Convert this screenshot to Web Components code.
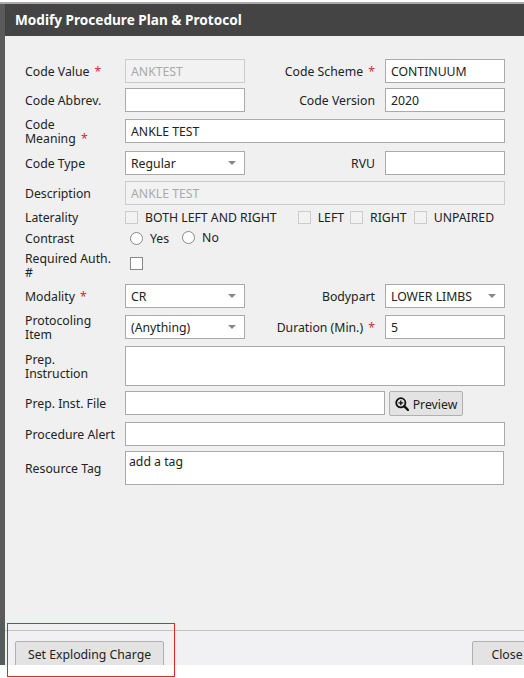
<!DOCTYPE html>
<html>
<head>
<meta charset="utf-8">
<title>Modify Procedure Plan &amp; Protocol</title>
<style>
  html, body { margin: 0; padding: 0; background: #fff; }
  body { font: 12.25px/14px "Noto Sans", "Open Sans", sans-serif; color: #222; }
  #left { margin-left: 21px; }
  #right { margin-left: 6px; }
  #unpaired { margin-left: 7px; }
</style>
</head>
<body>
<modal-shell heading="Modify Procedure Plan &amp; Protocol">
  <form-row label="Code Value" required side-label="Code Scheme" side-required>
    <text-field disabled>ANKTEST</text-field>
    <text-field slot="side">CONTINUUM</text-field>
  </form-row>
  <form-row label="Code Abbrev." side-label="Code Version" style="--gap:5px">
    <text-field></text-field>
    <text-field slot="side">2020</text-field>
  </form-row>
  <form-row label="Code<br>Meaning" required wide style="--gap:7px">
    <text-field>ANKLE TEST</text-field>
  </form-row>
  <form-row label="Code Type" side-label="RVU" style="--gap:8px">
    <select-field>Regular</select-field>
    <text-field slot="side"></text-field>
  </form-row>
  <form-row label="Description" wide style="--gap:6px">
    <text-field disabled>ANKLE TEST</text-field>
  </form-row>
  <form-row label="Laterality" wide style="--gap:5px;--row:14px">
    <check-row>
      <check-box>BOTH LEFT AND RIGHT</check-box>
      <check-box id="left">LEFT</check-box>
      <check-box id="right">RIGHT</check-box>
      <check-box id="unpaired">UNPAIRED</check-box>
    </check-row>
  </form-row>
  <form-row label="Contrast" wide style="--gap:6px;--row:16px">
    <check-row style="padding-left:5px">
      <radio-dot>Yes</radio-dot>
      <radio-dot style="margin-left:13px;margin-top:-2px">No</radio-dot>
    </check-row>
  </form-row>
  <form-row label="Required Auth.<br>#" wide style="--gap:5px;--row:28px">
    <check-row style="padding-left:5px;margin-bottom:3px"><check-box active></check-box></check-row>
  </form-row>
  <form-row label="Modality" required side-label="Bodypart" style="--gap:5px">
    <select-field>CR</select-field>
    <select-field slot="side">LOWER LIMBS</select-field>
  </form-row>
  <form-row label="Protocoling<br>Item" side-label="Duration (Min.)" side-required style="--gap:7px">
    <select-field>(Anything)</select-field>
    <text-field slot="side">5</text-field>
  </form-row>
  <form-row label="Prep.<br>Instruction" wide style="--gap:7px;--row:40px">
    <text-field style="height:40px"></text-field>
  </form-row>
  <form-row label="Prep. Inst. File" wide style="--gap:5px">
    <check-row style="height:24px;align-items:flex-start">
      <text-field style="width:260px"></text-field>
      <push-button icon style="margin-left:4px;height:25px;width:74px"><span style="padding-top:2px">Preview</span></push-button>
    </check-row>
  </form-row>
  <form-row label="Procedure Alert" wide style="--gap:7px">
    <text-field></text-field>
  </form-row>
  <form-row label="Resource Tag" wide style="--gap:5px;--row:34px">
    <text-field top style="height:34px;width:379px">add a tag</text-field>
  </form-row>
  <push-button slot="footer" style="width:149px">Set Exploding Charge</push-button>
  <push-button slot="footer" style="width:70px;margin-left:auto;margin-right:-18px">Close</push-button>
</modal-shell>

<script>
class ModalShell extends HTMLElement {
  constructor() {
    super();
    this.attachShadow({ mode: "open" });
  }

  connectedCallback() {
    this.shadowRoot.innerHTML = `
    <style>
      :host { display: block; position: relative; height: 678px; overflow: hidden; }
      .frame { height: 661px; margin-top: 2px; border-top: 2px solid #a9a9a9; display: flex; }
      .edge { width: 5px; background: #5a5a5a; flex: none; }
      .modal { flex: 1; min-width: 0; display: flex; flex-direction: column; background: #f0f0f0; overflow: hidden; }
      header {
        height: 32px; flex: none; background: #444; color: #fff;
        font-weight: 700; font-size: 13.6px; line-height: 32px; padding-left: 10px;
      }
      .body { flex: 1; padding: 23px 19px 0 20px; display: flex; flex-direction: column; }
      footer {
        box-sizing: border-box; height: 35px; flex: none; border-top: 1px solid #c2c2c2; background: #f1f1f3;
        display: flex; align-items: flex-start; padding: 10px 0 0 10px; overflow: hidden;
      }
      .mark {
        position: absolute; left: 7px; top: 623px; width: 166px; height: 52px;
        border: 1px solid #e0262c; pointer-events: none;
      }
    </style>
    <div class="frame">
      <div class="edge"></div>
      <div class="modal">
        <header>${this.getAttribute("heading").replace("&", "&amp;")}</header>
        <div class="body"><slot></slot></div>
        <footer><slot name="footer"></slot></footer>
      </div>
    </div>
    <div class="mark"></div>
    `;
  }
}

class FormRow extends HTMLElement {
  constructor() {
    super();
    this.attachShadow({ mode: "open" });
  }

  connectedCallback() {
    const star = "<i>*</i>";
    const main = this.getAttribute("label");
    const side = this.getAttribute("side-label");
    this.shadowRoot.innerHTML = `
    <style>
      :host {
        display: grid; margin-top: var(--gap, 0);
        grid-template-columns: 100px 120px 140px 120px;
        grid-template-rows: var(--row, 24px);
        height: var(--row, 24px); align-items: center;
      }
      :host([wide]) .field { grid-column: 2 / 5; }
      .text, .side-text { padding-top: 2px; }
      .side-text { text-align: right; padding-right: 10px; }
      .field { min-width: 0; }
      i { color: #d9263a; font-style: normal; margin-left: 2px; }
    </style>
    <div class="text">${main}${this.hasAttribute("required") ? " " + star : ""}</div>
    <div class="field"><slot></slot></div>
    ${side ? `<div class="side-text">${side}${this.hasAttribute("side-required") ? " " + star : ""}</div>
    <div class="field"><slot name="side"></slot></div>` : ""}
    `;
  }
}

class TextField extends HTMLElement {
  constructor() {
    super();
    this.attachShadow({ mode: "open" });
    this.shadowRoot.innerHTML = `
    <style>
      :host {
        display: flex; align-items: center; box-sizing: border-box; height: 24px;
        border: 1px solid #aaa; background: #fff; padding: 2px 5px 0; color: #222;
      }
      :host([disabled]) { background: #f2f2f2; border-color: #ccc; color: #aaa; }
      :host([top]) { align-items: flex-start; padding: 3px 3px; }
    </style>
    <slot></slot>
    `;
  }
}

class SelectField extends HTMLElement {
  constructor() {
    super();
    this.attachShadow({ mode: "open" });
    this.shadowRoot.innerHTML = `
    <style>
      :host {
        display: flex; align-items: center; justify-content: space-between;
        box-sizing: border-box; height: 24px; border: 1px solid #aaa; background: #fff;
        padding: 2px 8px 0 5px; color: #222;
      }
      b { width: 0; height: 0; margin-top: -2px; border: 4px solid transparent; border-top: 4px solid #888; border-bottom: 0; }
    </style>
    <slot></slot><b></b>
    `;
  }
}

class CheckRow extends HTMLElement {
  constructor() {
    super();
    this.attachShadow({ mode: "open" });
    this.shadowRoot.innerHTML = `
    <style>:host { display: flex; align-items: center; }</style>
    <slot></slot>
    `;
  }
}

class CheckBox extends HTMLElement {
  constructor() {
    super();
    this.attachShadow({ mode: "open" });
    this.shadowRoot.innerHTML = `
    <style>
      :host { display: inline-flex; align-items: center; gap: 7px; white-space: nowrap; flex: none; }
      span { width: 13px; height: 13px; box-sizing: border-box; border: 1px solid #ccc; background: #f2f2f2; flex: none; }
      em { font-style: normal; padding-top: 2px; }
      :host([active]) span { border-color: #888; background: #fff; }
    </style>
    <span></span><em><slot></slot></em>
    `;
  }
}

class RadioDot extends HTMLElement {
  constructor() {
    super();
    this.attachShadow({ mode: "open" });
    this.shadowRoot.innerHTML = `
    <style>
      :host { display: inline-flex; align-items: center; gap: 7px; white-space: nowrap; }
      span { width: 13px; height: 13px; box-sizing: border-box; border: 1px solid #888; border-radius: 50%; background: #fff; flex: none; }
      em { font-style: normal; padding-top: 2px; }
    </style>
    <span></span><em><slot></slot></em>
    `;
  }
}

class PushButton extends HTMLElement {
  constructor() {
    super();
    this.attachShadow({ mode: "open" });
  }

  connectedCallback() {
    const icon = this.hasAttribute("icon") ? `
      <svg width="14" height="14" viewBox="0 0 14 14" fill="none" stroke="#111">
        <circle cx="5.8" cy="5.8" r="4.6" stroke-width="1.8"/>
        <path d="M9.2 9.2L13 13" stroke-width="2.4" stroke-linecap="round"/>
        <path d="M3.4 5.8h4.8M5.8 3.4v4.8" stroke-width="1.3"/>
      </svg>` : "";
    this.shadowRoot.innerHTML = `
    <style>
      :host {
        display: inline-flex; align-items: center; justify-content: center; gap: 4px;
        box-sizing: border-box; height: 28px; flex: none; background: #e3e3e3; color: #222;
        border: 1px solid #b0b0b0; border-radius: 2px; white-space: nowrap;
      }
    </style>
    ${icon}<slot></slot>
    `;
  }
}

customElements.define("modal-shell", ModalShell);
customElements.define("form-row", FormRow);
customElements.define("text-field", TextField);
customElements.define("select-field", SelectField);
customElements.define("check-row", CheckRow);
customElements.define("check-box", CheckBox);
customElements.define("radio-dot", RadioDot);
customElements.define("push-button", PushButton);
</script>
</body>
</html>
